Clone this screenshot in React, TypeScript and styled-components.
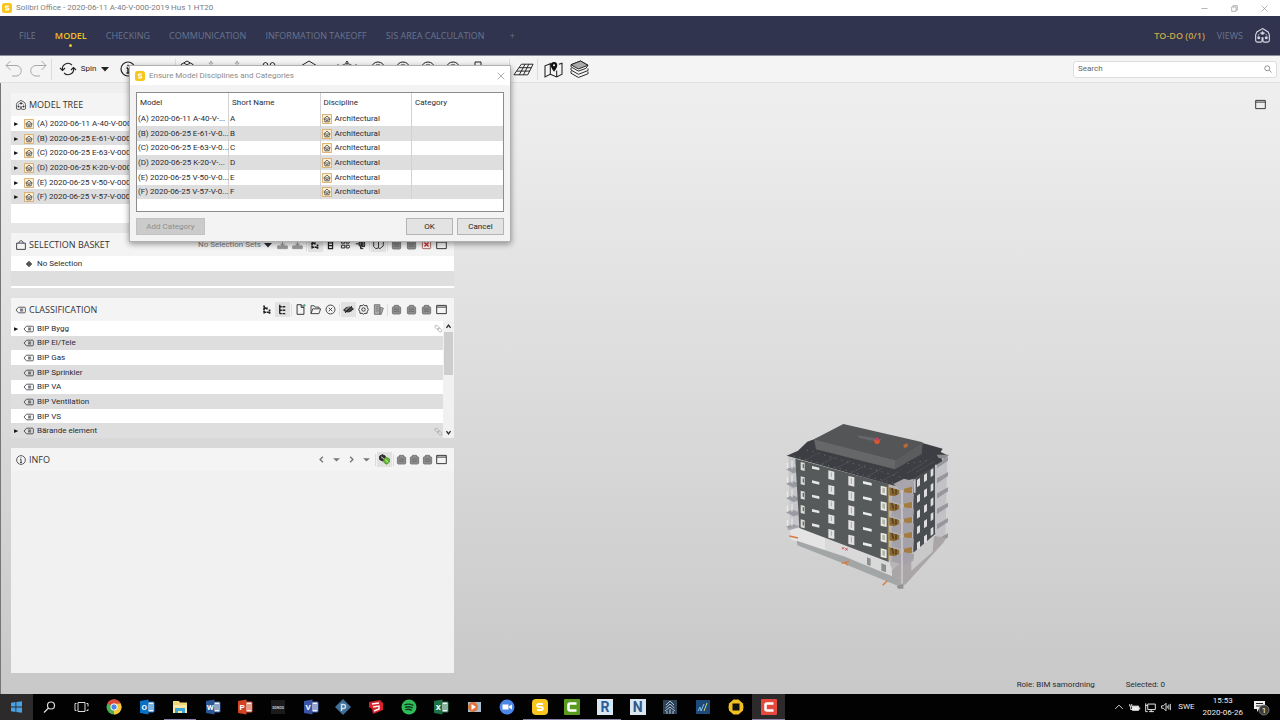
import React from 'react';
import styled, { createGlobalStyle } from 'styled-components';

const GlobalStyle = createGlobalStyle`
  * { box-sizing: border-box; }
  body { margin: 0; background: #c8c8c8; }
  body, button, input, select, table {
    font-family: Roboto, "Noto Sans", sans-serif;
    font-size: 8px;
    line-height: 12px;
    color: #2b2b33;
  }
  button { padding: 0; border: 0; background: none; }
  ul { list-style: none; margin: 0; padding: 0; }
`;

/* ---------- icons ---------- */

const Svg = styled.svg<{ $size?: number }>`
  width: ${(p) => p.$size ?? 11}px;
  height: ${(p) => p.$size ?? 11}px;
  flex: none;
  display: block;
  fill: none;
  stroke: currentColor;
  stroke-width: 1.4;
  overflow: visible;
`;

const basket = (
  <>
    <rect x="2" y="4" width="12" height="10.500" rx="1.500" fill="#8f8f8f" stroke="#777" />
    <path d="M5 4V2h6v2M4 7.500h8M4 10.500h8" stroke="#6a6a6a" />
  </>
);

const shapes: Record<string, React.ReactNode> = {
  undo: <path d="M4.500 0 0 4.500l4.500 4.500M0 4.500h10a5.200 5.200 0 0 1 0 10.500H6" strokeWidth="1" />,
  redo: <path d="M11.500 0 16 4.500 11.500 9M16 4.500H6a5.200 5.200 0 0 0 0 10.500h4" strokeWidth="1" />,
  spin: (
    <>
      <path d="M2.500 9A5.500 5.500 0 0 1 12 4.200M13.500 7A5.500 5.500 0 0 1 4 11.800" strokeWidth="1.100" />
      <path d="m0 7 2.500 2.500L5 7M11 9l2.500-2.500L16 9" strokeWidth="1.100" />
    </>
  ),
  info: (
    <>
      <circle cx="8" cy="8" r="7" strokeWidth="1.200" />
      <path d="M8 7v5M6.500 7H8M6.500 12h3M8 3.800v1.400" />
    </>
  ),
  cube: <path d="M8 0 14 3.500V12l-6 3-6-3V3.500zM2 4l6 3 6-3M8 7v8M5 2l3 2 3-2" strokeWidth="1" />,
  pan: <path d="M8 0v14M1 8h14M8 0 6 3M8 0l2 3M1 8l2.500-2M1 8l2.500 2M15 8l-2.500-2M15 8l-2.500 2" strokeWidth="1" />,
  people: <path d="M2 5a2.500 3.500 0 0 1 5 0v5H2zM9 5a2.500 3.500 0 0 1 5 0v5H9z" strokeWidth="1" />,
  roof: <path d="M-1 5.500 8 0l9 5.500V15H-1z" strokeWidth="1" />,
  axes: <path d="M8 0v6M6.500 1.500 8 0l1.500 1.500M0 4.500l8 3.500 8-3.500M-1 3v4M17 3v4M8 8v6M3 4.500 8 2l5 2.500" strokeWidth=".8" />,
  round: <path d="M2 6a6 5 0 0 1 12 0v4a6 5 0 0 1-12 0zM6 4h4" strokeWidth="1" />,
  page: <path d="M5 1h6v13H5z" strokeWidth="1" />,
  grid: <path d="M6 3h11l-5 10-13 0zM9.500 3 4 13M13 3 8 13M3.800 6.300h11.700M1.500 9.500h12.500" strokeWidth=".9" />,
  map: (
    <>
      <path d="M5 2.500 0 4.500V15l5-2.500V2.500l2 1M5 12.500l6 2.500 5-2.500V2l-3 1M11 9v6" strokeWidth="1" />
      <path d="M8.500 10C6 7 5.500 5.500 5.500 4a3 3 0 0 1 6 0c0 1.500-.500 3-3 6z" fill="#111" stroke="none" />
      <circle cx="8.500" cy="4" r="1" fill="#fff" stroke="none" />
    </>
  ),
  layers: (
    <>
      <path d="M0 9.500v2l7 4 9-3.500v-2M0 6.500v2l7 4 9-3.500V7" strokeWidth=".9" />
      <path d="M0 3.500 9 0l7 4-2 3-7 2.500-7-4z" strokeWidth=".9" fill="#f4f4f4" />
      <path d="M0 3.500 9 0l7 4-9 3.500z" fill="#aaa" strokeWidth=".9" />
    </>
  ),
  house: (
    <>
      <path d="M8 .6 14 4.200l1.300 3V13a2 2 0 0 1-2 2H10a1.500 1.500 0 0 1-1.500-1.500v-3h-1v3A1.500 1.500 0 0 1 6 15H2.700a2 2 0 0 1-2-2V7.200L2 4.200z" strokeWidth="1.200" />
      <circle cx="8" cy="5.500" r="1.600" fill="currentColor" stroke="none" />
      <circle cx="4" cy="10.500" r="1.600" fill="currentColor" stroke="none" />
      <circle cx="12" cy="10.500" r="1.600" fill="currentColor" stroke="none" />
      <path d="M3 8 8 3.500 13 8" strokeWidth="1" strokeDasharray="2 1" />
    </>
  ),
  model: (
    <>
      <rect x="1" y="1" width="14" height="14" fill="#fff6df" stroke="#d8a860" strokeWidth="1.500" />
      <path d="m3 7.500 5-4 5 4M4.500 8v4.500h7V8M2.500 8h11M6.500 10.500h3" stroke="#333" strokeWidth="1.200" />
    </>
  ),
  bag: <path d="M1 5h14v10H1zM4.500 5c0-5 7-5 7 0" />,
  tag: <path d="M0 8l4-4.500h9.500a1.500 1.500 0 0 1 1.500 1.500v6a1.500 1.500 0 0 1-1.500 1.500H4zM6.500 6.500h5M6.500 9.500h5M7 8h3.500" strokeWidth="1.200" />,
  diamond: <path d="M8 3.500 12.500 8 8 12.500 3.500 8z" fill="#555" stroke="#555" />,
  caret: <path d="M3 6h10l-5 5z" fill="currentColor" stroke="none" />,
  solid: <path d="M0 4h16l-8 9z" fill="currentColor" stroke="none" />,
  expand: <path d="M3 3l11 5-11 5z" fill="#111" stroke="none" />,
  down: <path d="M8 2v8M5 7l3 3 3-3M1 10v4h14v-4z" fill="#999" stroke="#999" />,
  tree1: <path d="M3 2v12M3 6h5M3 12h8M7 5v3M11 8v6" strokeWidth="2.500" stroke="#222" strokeDasharray="3 .8" />,
  tree2: <path d="M4 1v13M4 4h3M4 9h3M4 14h3M8 4h4M8 9h4M8 14h4" strokeWidth="2" stroke="#222" />,
  rows: <path d="M5 1h6v13H5zM5 5.500h6M5 9.500h6" stroke="#222" strokeWidth="1.800" />,
  nodes: <path d="M2 2h5v4H2zM2 9h5v4H2zM9 2h4l1 2-1 2H9zM9 9h4l1 2-1 2H9z" stroke="#222" />,
  fan: <path d="M1 7h5M6 4h4v6H6zM10 3h4v8h-4zM8 10v4h4" stroke="#222" fill="#777" />,
  box3: <path d="M1 4l5-2 2 2 3-2 4 2v6l-5 4-2-1-4 1-3-3zM8 4v9" stroke="#333" />,
  newdoc: (
    <>
      <path d="M3 1h6l4 4v10H3zM9 1v4h4" stroke="#333" />
      <path d="M13.500 0v4M11.500 2h4" stroke="#4a9a70" />
    </>
  ),
  folder: <path d="M1.500 14V2.500H6l1.500 2H13V7M1.500 14 4 7h11.500l-2.500 7z" stroke="#444" />,
  close: (
    <>
      <circle cx="8" cy="8" r="6.500" stroke="#444" />
      <path d="m5.500 5.500 5 5m0-5-5 5" stroke="#444" />
    </>
  ),
  eye: (
    <>
      <path d="M1 9c3-5 10-6 14-2-3 5-10 6-14 2z" fill="#444" stroke="#222" />
      <path d="M4 9c1-3 4-4 6-3" stroke="#ccc" />
      <path d="M3 13 13 3" stroke="#222" />
    </>
  ),
  gear: (
    <>
      <path d="M8 1l2 1.500 3-.200L13.500 5 15 8l-1.500 3-.500 2.700-3-.200L8 15l-2-1.500-3 .200L2.500 11 1 8l1.500-3L3 2.300l3 .200z" stroke="#333" />
      <circle cx="8" cy="8" r="2.500" stroke="#333" />
    </>
  ),
  report: <path d="M2 1h8v14H2zM4 4h4M4 7h4M4 10h4M10 5l5 1-3 9h-2z" fill="#aaa" stroke="#777" />,
  basket,
  redbox: (
    <>
      <rect x="2" y="2" width="12" height="12" rx="1" stroke="#a66" />
      <path d="m5 5 6 6m0-6-6 6" stroke="#d22" strokeWidth="1.800" />
    </>
  ),
  window: <path d="M1 2h14v12H1zM1 4.500h14" stroke="#333" />,
  link: <path d="M2 3l3-1 4 4-1 3-3 0-3-3zM7 8l3-1 4 4-1 3-3 0-3-3z" stroke="#aaa" />,
  left: <path d="M10 4 6 8l4 4" strokeWidth="2" />,
  right: <path d="m6 4 4 4-4 4" strokeWidth="2" />,
  up: <path d="m5 10 3-4 3 4" strokeWidth="2" />,
  dn: <path d="m5 6 3 4 3-4" strokeWidth="2" />,
  green: (
    <>
      <path d="M1 3l4-2 4 2v5L5 10 1 8z" fill="#333" stroke="#222" />
      <path d="M7 7l4-2 4 2v5l-4 3-4-3z" fill="#6db63c" stroke="#4c9a24" />
      <path d="M3 4l4 3M9 8l4 4" stroke="#d8f0c0" />
    </>
  ),
  search: <path d="M6.500 1.500a5 5 0 1 1 0 10 5 5 0 0 1 0-10zM10.500 10.500 15 15" />,
  min: <path d="M1 8h14" />,
  restore: <path d="M1.500 4.500h10v10h-10zM4.500 4.500v-3h10v10h-3" />,
  x: <path d="m1.500 1.500 13 13m0-13-13 13" />,
};

const Icon = ({ name, size }: { name: string; size?: number }) => (
  <Svg $size={size} viewBox="0 0 16 16" aria-hidden="true">{shapes[name]}</Svg>
);

const Logo = ({ size = 10 }: { size?: number }) => (
  <Svg $size={size} viewBox="0 0 16 16" aria-hidden="true">
    <rect width="16" height="16" rx="4" fill="#f7c51b" stroke="none" />
    <path d="M11 5H7C4.500 5 4.500 8 7 8h2c2.500 0 2.500 3 0 3H5" stroke="#fff" strokeWidth="1.800" />
  </Svg>
);

/* ---------- page frame ---------- */

const Page = styled.div`
  min-height: 100vh;
  display: flex;
  flex-direction: column;
  position: relative;
  overflow: hidden;
`;

const TitleBar = styled.header`
  height: 16px;
  padding: 0 12px 0 2px;
  display: flex;
  align-items: center;
  gap: 4px;
  background: #fff;
  color: #7c7c7c;
`;

const WindowButtons = styled.div`
  margin-left: auto;
  display: flex;
  gap: 23px;
  button { color: #888; }
`;

const NavBar = styled.nav`
  height: 40px;
  padding: 0 10px 0 19px;
  display: flex;
  align-items: center;
  gap: 19px;
  background: #30344e;
  border-bottom: 1px solid #8c8ea0;
`;

const NavLink = styled.a<{ $active?: boolean; $gold?: boolean }>`
  position: relative;
  font-family: "Open Sans", sans-serif;
  font-size: 9px;
  text-decoration: none;
  color: ${(p) => (p.$active ? '#f0c020' : p.$gold ? '#c5a548' : '#68748f')};
  font-weight: ${(p) => (p.$active || p.$gold ? 600 : 400)};
  &::after {
    content: '';
    display: ${(p) => (p.$active ? 'block' : 'none')};
    position: absolute;
    left: 50%;
    top: 14px;
    width: 3px;
    height: 3px;
    margin-left: -2px;
    border-radius: 50%;
    background: #f0c020;
  }
`;

const AddTab = styled(NavLink)`
  margin-left: 6px;
`;

const NavRight = styled.div`
  margin-left: auto;
  display: flex;
  align-items: center;
  gap: 12px;
  color: #d5d8e4;
`;

const ToolBar = styled.div`
  height: 27px;
  padding: 0 3px 0 1px;
  display: flex;
  align-items: center;
  background: #f4f4f4;
  border-bottom: 1px solid #e2e2e2;
`;

const Tool = styled.button<{ $w?: number; $dim?: boolean }>`
  width: ${(p) => p.$w ?? 25}px;
  height: 24px;
  flex: none;
  display: flex;
  align-items: center;
  justify-content: center;
  gap: 5px;
  color: ${(p) => (p.$dim ? '#a8a8a8' : '#222')};
`;

const ToolGroup = styled.div<{ $end?: number }>`
  display: flex;
  align-items: center;
  margin-right: ${(p) => p.$end ?? 0}px;
`;

const Rule = styled.span<{ $tall?: boolean }>`
  width: 1px;
  height: ${(p) => (p.$tall ? 21 : 12)}px;
  margin: 0 1px;
  flex: none;
  background: #dcdcdc;
`;

const SearchBox = styled.label`
  width: 204px;
  height: 17px;
  margin-left: auto;
  padding: 0 4px;
  display: flex;
  align-items: center;
  background: #fff;
  border: 1px solid #ddd;
  border-radius: 3px;
  color: #666;
  input {
    flex: 1;
    min-width: 0;
    padding: 0;
    border: 0;
    outline: 0;
    background: none;
  }
  input::placeholder { color: #666; opacity: 1; }
`;

const Workspace = styled.main`
  flex: 1;
  display: flex;
  background: linear-gradient(#efefef, #c8c8c8);
  border-left: 1px solid #777;
`;

const Sidebar = styled.div`
  width: 453px;
  padding: 10px 0 21px 10px;
  display: flex;
  flex-direction: column;
  gap: 10px;
`;

const Panel = styled.section<{ $grow?: boolean; $height?: number }>`
  flex: ${(p) => (p.$grow ? '1' : 'none')};
  height: ${(p) => (p.$height ? `${p.$height}px` : 'auto')};
  background: ${(p) => (p.$grow ? '#f1f1f1' : '#fff')};
`;

const PanelHead = styled.div`
  height: 23px;
  padding: 0 5px;
  display: flex;
  align-items: center;
  background: #f4f4f4;
`;

const PanelTitle = styled.h2`
  margin: 0 auto 0 3px;
  font-family: "Open Sans", sans-serif;
  font-size: 9px;
  font-weight: 400;
  color: #333;
`;

const PanelButton = styled.button<{ $w?: number; $on?: boolean; $grey?: boolean }>`
  width: ${(p) => p.$w ?? 15}px;
  height: 15px;
  display: flex;
  align-items: center;
  justify-content: center;
  background: ${(p) => (p.$on ? '#e2e2e2' : 'transparent')};
  color: ${(p) => (p.$grey ? '#777' : '#222')};
`;

const SetPicker = styled.label`
  display: flex;
  align-items: center;
  gap: 3px;
  margin-right: 3px;
  select {
    appearance: none;
    border: 0;
    padding: 0;
    background: none;
    color: #777;
  }
`;

const Rows = styled.ul<{ $height: number }>`
  flex: 1;
  height: ${(p) => p.$height}px;
  display: flex;
  flex-direction: column;
`;

const Row = styled.li<{ $shade?: boolean }>`
  flex: 1;
  min-height: 0;
  padding: 1px 0 0 2px;
  display: flex;
  align-items: center;
  gap: 3px;
  white-space: nowrap;
  background: ${(p) => (p.$shade ? '#dedede' : '#fff')};
  & > :last-child:not(span) { margin-left: auto; }
`;

const Arrow = styled.span`
  width: 8px;
  height: 8px;
  display: flex;
  align-items: center;
`;

const Scroller = styled.div`
  display: flex;
`;

const ScrollBar = styled.div`
  width: 11px;
  display: flex;
  flex-direction: column;
  align-items: center;
  justify-content: space-between;
  background: #f1f1f1;
`;

const Thumb = styled.div`
  width: 9px;
  height: 43px;
  margin-bottom: auto;
  background: #cdcdcd;
`;

const Viewport = styled.div`
  flex: 1;
  position: relative;
  display: flex;
  flex-direction: column;
  justify-content: space-between;
  align-items: flex-end;
  padding: 14px 12px 3px;
`;

const Scene = styled.svg`
  position: absolute;
  left: 316px;
  top: 327px;
  width: 200px;
  height: 190px;
`;

const Status = styled.div`
  display: flex;
  gap: 31px;
  padding-right: 103px;
`;

/* ---------- dialog ---------- */

const Dialog = styled.div`
  position: absolute;
  left: 129px;
  top: 65px;
  width: 382px;
  background: #f3f3f3;
  border: 1px solid #b0b0b0;
  box-shadow: 0 2px 6px rgba(0, 0, 0, 0.4);
`;

const DialogTitle = styled.div`
  height: 19px;
  padding: 0 5px;
  display: flex;
  align-items: center;
  gap: 4px;
  background: #fff;
  color: #8c8c8c;
  button { margin-left: auto; color: #888; }
`;

const DialogBody = styled.div`
  padding: 7px 6px 6px;
`;

const TableFrame = styled.div`
  height: 120px;
  background: #fff;
  border: 1px solid #8c8c8c;
`;

const Table = styled.table`
  width: 100%;
  table-layout: fixed;
  border-collapse: collapse;
  th, td {
    padding: 0 0 0 1px;
    text-align: left;
    font-weight: 400;
    white-space: nowrap;
    border-right: 1px solid #d2d2d2;
  }
  th { height: 18px; padding: 2px 3px 0; }
  th:last-child, td:last-child { border-right: 0; }
`;

const TableBody = styled.tbody`
  tr { height: 15px; }
  tr:nth-child(3n) { height: 14px; }
  tr:nth-child(even) { background: #dedede; }
`;

const Discipline = styled.span`
  display: flex;
  align-items: center;
  gap: 3px;
`;

const DialogActions = styled.div`
  margin-top: 6px;
  display: flex;
  gap: 4px;
`;

const DialogButton = styled.button<{ $wide?: boolean }>`
  width: ${(p) => (p.$wide ? 69 : 47)}px;
  height: 17px;
  padding-top: 1px;
  background: #e3e3e3;
  border: 1px solid #b4b4b4;
  color: #222;
  &:disabled {
    margin-right: auto;
    background: #cbcbcb;
    border-color: #c2c2c2;
    color: #8f8f8f;
  }
`;

/* ---------- task bar ---------- */

const TaskBar = styled.footer`
  height: 26px;
  display: flex;
  background: #020202;
  color: #eee;
`;

const Apps = styled.div`
  width: 785px;
  display: flex;
`;

const AppButton = styled.button<{ $lit?: boolean; $open?: boolean }>`
  flex: 1;
  min-width: 0;
  display: flex;
  align-items: center;
  justify-content: center;
  background: ${(p) => (p.$lit ? '#2c2a2a' : 'transparent')};
  box-shadow: ${(p) => (p.$open ? 'inset 0 -1px #8d86a8' : 'none')};
`;

const Tray = styled.div`
  margin-left: auto;
  padding-right: 11px;
  display: flex;
  align-items: center;
  gap: 5px;
`;

const Language = styled.span`
  margin: 0 3px 0 2px;
`;

const Clock = styled.time`
  margin-right: 5px;
  text-align: center;
`;

/* ---------- building ---------- */

const floors = [0, 1, 2, 3, 4];

const Building = () => (
  <Scene viewBox="0 0 600 570" role="img" aria-label="3D building model">
    <path d="M55 140 85 148 88 356 60 352z" fill="#c6c6ca" />
    {floors.map((i) => (
      <g key={i}>
        <path d={`M48 ${178 + i * 43}l20-8 16 6v10l-14 4z`} fill="#9a9aa2" />
        <path d={`M52 ${158 + i * 43}v18M66 ${152 + i * 43}v24`} stroke="#eee" strokeWidth="3" />
      </g>
    ))}
    <path d="M50 356 88 346 100 360 62 362z" fill="#a9a6a9" />
    <path d="M498 140 532 136 526 390 495 410z" fill="#c2c2c6" />
    {[0, 1, 2, 3, 4, 5].map((i) => (
      <path key={i} d={`M498 ${160 + i * 46}l36-20v12l-36 24z`} fill="#96969d" />
    ))}
    <path d="M355 225 435 200 440 430 400 530 355 455z" fill="#b7b5b8" />
    <path d="M60 360 88 352 358 452 366 506 165 430 62 388z" fill="#e4e4e4" />
    <path d="M165 385 358 452 366 506 165 430z" fill="#d9d9d9" />
    <path d="M80 392 225 440 385 506 400 532 385 528 230 464 82 406z" fill="#a3a6a6" />
    <path d="M366 480 435 425 495 378 528 384 520 398 405 525 366 500z" fill="#aaa5a6" />
    <path d="M424 430 492 378 488 425 424 482z" fill="#c9c9c9" />
    <path d="M76 146 356 222 356 456 88 354z" fill="#575a5a" />
    <path d="M430 208 500 160 496 372 430 428z" fill="#4b4e50" />
    <path d="M50 137 84 122 112 95 220 55 455 98 518 116 512 126 536 137 515 144 516 154 433 206 400 214 376 228z" fill="#3d3e43" />
    <path d="M500 134 536 134 524 146 506 144z" fill="#8f8c90" />
    <path d="M70 138 380 222M110 120 400 204M360 170 480 150" stroke="#67676b" strokeWidth="3" strokeDasharray="4 14" />
    <path d="M104 152l36-20M150 164l44-22M196 176l46-24M242 190l48-26M288 202l50-28M334 214l50-28M410 190l60-36M440 186l54-32" stroke="#55565a" strokeWidth="3" strokeDasharray="6 3" />
    <path d="M132 88 220 42 458 97 375 150z" fill="#535556" />
    <path d="M132 88 375 150 375 178 138 118z" fill="#656768" />
    <path d="M375 150 458 97 455 132 375 178z" fill="#5a5c5d" />
    <path d="M262 76 335 88 325 96 268 84z" fill="#68686c" />
    <path d="M370 222 402 206 432 214 430 236 396 244z" fill="#a9a6ab" />
    <circle cx="321" cy="94" r="8" fill="#e2562c" />
    <circle cx="321" cy="87" r="5" fill="#c53a6a" />
    <path d="m400 104 12-4 2 10-12 4z" fill="#b96a35" />
    {floors.map((i) => {
      const y = i * 45;
      return (
        <g key={i}>
          <path d={`M358 ${232 + y}l30 8v24l-30-8z`} fill="#8c6a34" />
          <path d={`M402 ${236 + y}l24-6v18l-24 8z`} fill="#a27c41" />
          <path d={`M366 ${262 + y}l34-16 32 6-2 20-32 12-34-10z`} fill="#a4a1a8" />
          <path d={`M366 ${234 + y}l4 18M378 ${238 + y}v16`} stroke="#5b4420" strokeWidth="5" />
          <path d={`M92 ${156 + i * 43}l12 3v24l-12-3z`} fill="#dcdcd8" />
          <path d={`M98 ${162 + i * 43}l4 1v12l-4-1z`} fill="#6b6d6d" />
          <path d={`M126 ${168 + i * 43}l22 5v8l-22-5z`} fill="#e6e6e6" />
          <path d={`M175 ${181 + i * 44}l18 4v26l-18-4z`} fill="#e2e2e2" />
          <path d={`M235 ${198 + i * 44}l18 4v28l-18-4z`} fill="#e2e2e2" />
          <path d={`M244 ${204 + i * 44}v18M184 ${187 + i * 44}v14`} stroke="#8a8c8c" strokeWidth="2" />
          <path d={`M279 ${213 + i * 46}l26 6v8l-26-6z`} fill="#ececec" />
          <path d={`M332 ${227 + i * 47}l18 4v26l-18-4z`} fill="#e9e9e4" />
          <path d={`M337 ${233 + i * 47}l8 2v15l-8-2z`} fill="#b0b4a4" />
          <path d={`M441 ${210 + i * 47}l9-6v22l-9 6z`} fill="#dddde0" />
          <path d={`M462 ${195 + i * 46}l9-6v22l-9 6z`} fill="#dddde0" />
          <path d={`M482 ${180 + i * 44}l8-6v22l-8 6z`} fill="#dddde0" />
        </g>
      );
    })}
    <path d="M355 226v226" stroke="#a8905c" strokeWidth="3" />
    <path d="M396 240v280M434 208v40M498 164v206" stroke="#c3c1c5" strokeWidth="6" />
    <path d="M380 528l20-6v14h-16z" fill="#8f9193" />
    <path d="M291 442l11 4v22l-11-4zM334 460l14 5v22l-14-5z" fill="#8c8f90" />
    <path d="M58 378l26 6M215 460l22-6M222 456l12 10M338 526l14-14" stroke="#d87a3c" strokeWidth="4" />
    <path d="M216 412l6 6M222 412l-6 6M226 415l7 6M233 415l-7 6" stroke="#d04450" strokeWidth="3" />
  </Scene>
);

/* ---------- task bar glyphs ---------- */

const Tile = styled.span<{ $bg: string; $fg?: string }>`
  width: 16px;
  height: 16px;
  flex: none;
  display: flex;
  align-items: center;
  justify-content: center;
  background: ${(p) => p.$bg};
  color: ${(p) => p.$fg ?? '#fff'};
  font-size: 14px;
  font-weight: 700;
`;

const Office = ({ color, letter }: { color: string; letter: string }) => (
  <Svg $size={16} viewBox="0 0 16 16" aria-hidden="true">
    <path d="M8 3h7v10H8z" fill="#f2f4f8" stroke={color} strokeWidth="1" />
    <path d="M10 6h4M10 8h4M10 10h4" stroke={color} strokeWidth="1" />
    <path d="M1 2 9.500 .5v15L1 14z" fill={color} stroke="none" />
    <text x="5.200" y="11" textAnchor="middle" fontSize="8" fontWeight="700" fill="#fff" stroke="none">{letter}</text>
  </Svg>
);

const Glyph = ({ children }: { children: React.ReactNode }) => (
  <Svg $size={16} viewBox="0 0 16 16" aria-hidden="true">{children}</Svg>
);

const Camtasia = ({ color }: { color: string }) => (
  <Glyph>
    <rect width="16" height="16" rx="1" fill={color} stroke="none" />
    <path d="M12.500 4.500H6a1.500 1.500 0 0 0-1.500 1.500v4A1.500 1.500 0 0 0 6 11.500h6.500" stroke="#fff" strokeWidth="2.600" />
  </Glyph>
);

const apps: { name: string; lit?: boolean; open?: boolean; art: React.ReactNode }[] = [
  { name: 'Start', lit: true, art: <Glyph><path d="m3 3.800 4.500-.700v4.500H3zM8.300 3 14 2.200v5.400H8.300zM3 8.400h4.500v4.500L3 12.200zM8.300 8.400H14v5.400l-5.700-.800z" fill="#4aa0e0" stroke="none" /></Glyph> },
  { name: 'Search', art: <Glyph><path d="M10 3a3.500 3.500 0 1 1 0 7 3.500 3.500 0 0 1 0-7zM7.500 9 3 13.500" stroke="#ddd" strokeWidth="1.200" /></Glyph> },
  { name: 'Task view', art: <Glyph><path d="M4 3.500h7v9H4zM2.500 4.500H1v7h1.500M12.500 4.500H14v3M12.500 11.500H14V10" stroke="#ddd" strokeWidth="1" /></Glyph> },
  { name: 'Chrome', art: (
    <Glyph>
      <circle cx="8" cy="8" r="7.500" fill="#4caf50" stroke="none" />
      <path d="M1.500 4.250A7.500 7.500 0 0 1 14.500 4.250L8 8z" fill="#e04a3a" stroke="none" />
      <path d="M14.500 4.250A7.500 7.500 0 0 1 8 15.500L8 8 8 4.500z" fill="#fbc935" stroke="none" />
      <path d="M1.500 4.250 8 4.500h6.500A7.500 7.500 0 0 0 1.500 4.250z" fill="#e04a3a" stroke="none" />
      <circle cx="8" cy="8" r="3.200" fill="#4a86e8" stroke="#fff" strokeWidth="1" />
    </Glyph>
  ) },
  { name: 'Outlook', art: <Office color="#0a70c4" letter="O" /> },
  { name: 'Explorer', open: true, art: <Glyph><path d="M1 2h6l1 1.500h7V14H1z" fill="#f3d67a" stroke="none" /><path d="M1 6h14v8H1z" fill="#fbe7a0" stroke="none" /><path d="M3 14V9h10v5h-3v-2H6v2z" fill="#3ea6d8" stroke="none" /></Glyph> },
  { name: 'Word', art: <Office color="#2b5797" letter="W" /> },
  { name: 'PowerPoint', art: <Office color="#d04423" letter="P" /> },
  { name: 'Sonos', art: <Glyph><path d="M1 1h14v14H1z" fill="#1b1b1b" stroke="none" /><text x="8" y="9.500" textAnchor="middle" fontSize="3.500" fontWeight="700" fill="#ccc" stroke="none">SONOS</text></Glyph> },
  { name: 'Visio', art: <Office color="#3955a3" letter="V" /> },
  { name: 'P', art: <Glyph><path d="m8 0 8 8-8 8-8-8z" fill="#3f7099" stroke="none" /><path d="M6.500 12V5.500h2a2 2 0 0 1 0 4h-2" stroke="#cfe0ee" /></Glyph> },
  { name: 'SketchUp', art: <Glyph><path d="M1 3 12 1l3 3v7L5 15l-1-5-3-2z" fill="#d8222a" stroke="none" /><path d="m4 5 7-1M5 8l6-1v3l-5 2" stroke="#fff" /></Glyph> },
  { name: 'Spotify', art: <Glyph><circle cx="8" cy="8" r="7.500" fill="#2ebd59" stroke="none" /><path d="M3.500 5.800c3-1 6.500-.600 9 .700M4 8.300c2.700-.800 5.500-.500 7.700.700M4.500 10.600c2-.500 4.400-.400 6.200.700" stroke="#10361c" /></Glyph> },
  { name: 'Excel', art: <Office color="#1f7246" letter="X" /> },
  { name: 'Media player', art: <Glyph><path d="M2 3h13v10H2z" fill="#a9bfd0" stroke="none" /><circle cx="7" cy="8" r="5" fill="#e2763a" stroke="none" /><path d="m5.500 5 4.500 3-4.500 3z" fill="#fff" stroke="none" /></Glyph> },
  { name: 'Zoom', art: <Glyph><circle cx="8" cy="8" r="7.500" fill="#4a87e8" stroke="none" /><path d="M3.500 5.500h6v5h-6zM10 7.500l3-2v5l-3-2z" fill="#fff" stroke="none" /></Glyph> },
  { name: 'Solibri', open: true, art: <Logo size={16} /> },
  { name: 'Camtasia', open: true, art: <Camtasia color="#5a9a1e" /> },
  { name: 'Revit', open: true, art: <Tile $bg="#dbe6f3" $fg="#2a5d9c">R</Tile> },
  { name: 'Navisworks', art: <Tile $bg="#dbe6f3" $fg="#2f5a8c">N</Tile> },
  { name: 'Tower', art: <Glyph><path d="M1 1h14v14H1z" fill="#2c4258" stroke="none" /><path d="m4 6 4-4 4 4M3.500 9 8 5l4.500 4M3 12l5-4 5 4M5 15v-3M8 15v-5M11 15v-3" stroke="#b3c3d0" strokeWidth="1" /></Glyph> },
  { name: 'Chart', art: <Glyph><path d="M1 1h14v14H1z" fill="#1d4a78" stroke="none" /><path d="m3 12 2-4 1 4 3-7" stroke="#7fc0e8" strokeWidth="1" /><path d="m9 12 3-8" stroke="#d8d070" strokeWidth="1" /></Glyph> },
  { name: 'Ring', art: <Glyph><path d="M5.500 .5h5l4.500 4 .5 3.500-.5 3.500-4.500 4h-5L1 11.500.5 8 1 4.500z" fill="#f0c020" stroke="none" /><path d="M4.500 4.500h7v7h-7z" fill="#111" stroke="none" /></Glyph> },
  { name: 'Recorder', lit: true, open: true, art: <Camtasia color="#e5483e" /> },
];

/* ---------- data ---------- */

const models = [
  { id: 'A', name: '(A) 2020-06-11 A-40-V-000', short: '(A) 2020-06-11 A-40-V-...' },
  { id: 'B', name: '(B) 2020-06-25 E-61-V-000', short: '(B) 2020-06-25 E-61-V-0...' },
  { id: 'C', name: '(C) 2020-06-25 E-63-V-000', short: '(C) 2020-06-25 E-63-V-0...' },
  { id: 'D', name: '(D) 2020-06-25 K-20-V-000', short: '(D) 2020-06-25 K-20-V-...' },
  { id: 'E', name: '(E) 2020-06-25 V-50-V-000', short: '(E) 2020-06-25 V-50-V-0...' },
  { id: 'F', name: '(F) 2020-06-25 V-57-V-000', short: '(F) 2020-06-25 V-57-V-0...' },
];

const classes = [
  { name: 'BIP Bygg', parent: true },
  { name: 'BIP El/Tele' },
  { name: 'BIP Gas' },
  { name: 'BIP Sprinkler' },
  { name: 'BIP VA' },
  { name: 'BIP Ventilation' },
  { name: 'BIP VS' },
  { name: 'Bärande element', parent: true },
];

const tabs = ['FILE', 'MODEL', 'CHECKING', 'COMMUNICATION', 'INFORMATION TAKEOFF', 'SIS AREA CALCULATION'];

const PB = ({ icon, on, w, grey }: { icon: string; on?: boolean; w?: number; grey?: boolean }) => (
  <PanelButton $on={on} $w={w} $grey={grey} aria-label={icon}><Icon name={icon} /></PanelButton>
);

const T = ({ icon, w, dim, size = 16 }: { icon: string; w?: number; dim?: boolean; size?: number }) => (
  <Tool $w={w} $dim={dim} aria-label={icon}><Icon name={icon} size={size} /></Tool>
);

export default function App() {
  return (
    <Page>
      <GlobalStyle />
      <TitleBar>
        <Logo />
        <span>Solibri Office - 2020-06-11 A-40-V-000-2019 Hus 1 HT20</span>
        <WindowButtons>
          <button aria-label="Minimize"><Icon name="min" size={7} /></button>
          <button aria-label="Restore"><Icon name="restore" size={7} /></button>
          <button aria-label="Close"><Icon name="x" size={7} /></button>
        </WindowButtons>
      </TitleBar>

      <NavBar>
        {tabs.map((t) => (
          <NavLink key={t} href="#" $active={t === 'MODEL'}>{t}</NavLink>
        ))}
        <AddTab href="#" aria-label="Add view">+</AddTab>
        <NavRight>
          <NavLink href="#" $gold>TO-DO (0/1)</NavLink>
          <NavLink href="#">VIEWS</NavLink>
          <Icon name="house" size={15} />
        </NavRight>
      </NavBar>

      <ToolBar>
        <ToolGroup>
          <T icon="undo" dim />
          <T icon="redo" w={24} dim />
        </ToolGroup>
        <Rule $tall />
        <ToolGroup $end={34}>
          <Tool $w={63}>
            <Icon name="spin" size={16} />
            Spin
            <Icon name="solid" size={8} />
          </Tool>
          <T icon="info" w={24} />
        </ToolGroup>
        <Rule $tall />
        <ToolGroup>
          <T icon="cube" w={20} />
          <T icon="pan" w={28} dim />
          <T icon="pan" w={24} dim />
          <T icon="people" w={40} />
          <T icon="roof" w={40} />
          <T icon="axes" w={36} />
        </ToolGroup>
        <ToolGroup $end={18}>
          <T icon="round" />
          <T icon="round" />
          <T icon="round" />
          <T icon="round" />
          <T icon="page" />
        </ToolGroup>
        <Rule $tall />
        <T icon="grid" size={17} />
        <Rule $tall />
        <T icon="map" size={17} w={28} />
        <T icon="layers" size={17} />
        <SearchBox>
          <input type="search" placeholder="Search" aria-label="Search" />
          <Icon name="search" size={8} />
        </SearchBox>
      </ToolBar>

      <Workspace>
        <Sidebar>
          <Panel $height={130}>
            <PanelHead>
              <Icon name="house" size={10} />
              <PanelTitle>MODEL TREE</PanelTitle>
            </PanelHead>
            <Rows $height={88}>
              {models.map((m, i) => (
                <Row key={m.id} $shade={i % 2 === 1}>
                  <Arrow><Icon name="expand" size={6} /></Arrow>
                  <Icon name="model" size={10} />
                  <span>{m.name}</span>
                </Row>
              ))}
            </Rows>
          </Panel>

          <Panel $height={55}>
            <PanelHead>
              <Icon name="bag" size={10} />
              <PanelTitle>SELECTION BASKET</PanelTitle>
              <SetPicker>
                <select aria-label="Selection set"><option>No Selection Sets</option></select>
                <Icon name="solid" size={8} />
              </SetPicker>
              <PB icon="down" />
              <PB icon="down" />
              <Rule />
              <PB icon="tree1" on />
              <PB icon="rows" />
              <PB icon="nodes" />
              <PB icon="fan" />
              <Rule />
              <PB icon="box3" on />
              <Rule />
              <PB icon="basket" />
              <PB icon="basket" />
              <PB icon="redbox" />
              <PB icon="window" />
            </PanelHead>
            <Rows $height={30}>
              <Row>
                <Arrow />
                <Icon name="diamond" size={10} />
                <span>No Selection</span>
              </Row>
              <Row $shade />
            </Rows>
          </Panel>

          <Panel $height={140}>
            <PanelHead>
              <Icon name="tag" size={10} />
              <PanelTitle>CLASSIFICATION</PanelTitle>
              <PB icon="tree1" />
              <PB icon="tree2" on />
              <Rule />
              <PB icon="newdoc" />
              <PB icon="folder" />
              <PB icon="close" />
              <Rule />
              <PB icon="eye" on />
              <PB icon="gear" />
              <PB icon="report" />
              <Rule />
              <PB icon="basket" />
              <PB icon="basket" />
              <PB icon="basket" />
              <PB icon="window" />
            </PanelHead>
            <Scroller>
              <Rows $height={117}>
                {classes.map((c, i) => (
                  <Row key={c.name} $shade={i % 2 === 1}>
                    <Arrow>{c.parent && <Icon name="expand" size={6} />}</Arrow>
                    <Icon name="tag" size={10} />
                    <span>{c.name}</span>
                    {c.parent && <Icon name="link" size={9} />}
                  </Row>
                ))}
              </Rows>
              <ScrollBar>
                <Icon name="up" />
                <Thumb />
                <Icon name="dn" />
              </ScrollBar>
            </Scroller>
          </Panel>

          <Panel $grow>
            <PanelHead>
              <Icon name="info" size={10} />
              <PanelTitle>INFO</PanelTitle>
              <PB icon="left" grey />
              <PB icon="caret" grey />
              <PB icon="right" grey />
              <PB icon="caret" grey />
              <Rule />
              <PB icon="green" on />
              <Rule />
              <PB icon="basket" w={13} />
              <PB icon="basket" w={13} />
              <PB icon="basket" w={13} />
              <PB icon="window" />
            </PanelHead>
          </Panel>
        </Sidebar>

        <Viewport>
          <PanelButton aria-label="Maximize"><Icon name="window" /></PanelButton>
          <Building />
          <Status>
            <span>Role: BIM samordning</span>
            <span>Selected: 0</span>
          </Status>
        </Viewport>
      </Workspace>

      <Dialog role="dialog" aria-labelledby="dialog-title">
        <DialogTitle>
          <Logo />
          <span id="dialog-title">Ensure Model Disciplines and Categories</span>
          <button aria-label="Close dialog"><Icon name="x" size={8} /></button>
        </DialogTitle>
        <DialogBody>
          <TableFrame>
            <Table>
              <thead>
                <tr>
                  <th>Model</th>
                  <th>Short Name</th>
                  <th>Discipline</th>
                  <th>Category</th>
                </tr>
              </thead>
              <TableBody>
                {models.map((m) => (
                  <tr key={m.id}>
                    <td>{m.short}</td>
                    <td>{m.id}</td>
                    <td><Discipline><Icon name="model" size={10} />Architectural</Discipline></td>
                    <td />
                  </tr>
                ))}
              </TableBody>
            </Table>
          </TableFrame>
          <DialogActions>
            <DialogButton $wide disabled>Add Category</DialogButton>
            <DialogButton>OK</DialogButton>
            <DialogButton>Cancel</DialogButton>
          </DialogActions>
        </DialogBody>
      </Dialog>

      <TaskBar>
        <Apps>
          {apps.map((a) => (
            <AppButton key={a.name} aria-label={a.name} $lit={a.lit} $open={a.open}>{a.art}</AppButton>
          ))}
        </Apps>
        <Tray>
          <Svg $size={10} viewBox="0 0 16 16"><path d="m2 11 6-6 6 6" /></Svg>
          <Svg $size={11} viewBox="0 0 16 16"><path d="M5 6h9v6H5zM15.500 8v3" fill="#eee" /><path d="M1 3v3h3V3M2.500 6v5H5" /></Svg>
          <Svg $size={11} viewBox="0 0 16 16"><path d="M4 3h11v8H4zM9 11v3M6 14h7M1 2v12h3M1 5h3" /></Svg>
          <Svg $size={10} viewBox="0 0 16 16"><path d="M1 6h3l4-4v12l-4-4H1zM10 6v4M12.500 4v8M15 3v10" /></Svg>
          <Language>SWE</Language>
          <Clock>15:53<br />2020-06-26</Clock>
          <Svg $size={16} viewBox="0 0 16 16">
            <path d="M1 2h11v8H6l-2 3v-3H1z" fill="#f2f2f2" stroke="none" />
            <path d="M3 4.500h7M3 7h7" stroke="#222" strokeWidth="1" />
            <circle cx="11" cy="11" r="5" fill="#3b3b3b" stroke="#888" strokeWidth=".8" />
            <text x="11" y="14" textAnchor="middle" fontSize="8" fill="#fff" stroke="none">1</text>
          </Svg>
        </Tray>
      </TaskBar>
    </Page>
  );
}
